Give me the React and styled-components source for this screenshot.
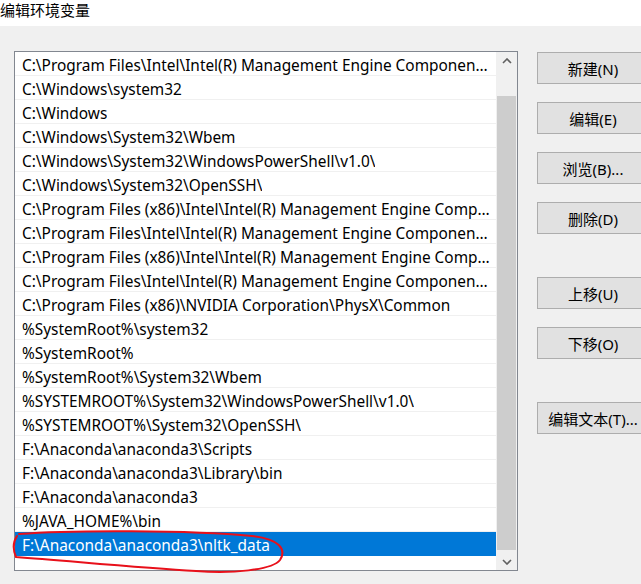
import styled, { createGlobalStyle } from "styled-components";

const paths = [
  "C:\\Program Files\\Intel\\Intel(R) Management Engine Components\\DAL",
  "C:\\Windows\\system32",
  "C:\\Windows",
  "C:\\Windows\\System32\\Wbem",
  "C:\\Windows\\System32\\WindowsPowerShell\\v1.0\\",
  "C:\\Windows\\System32\\OpenSSH\\",
  "C:\\Program Files (x86)\\Intel\\Intel(R) Management Engine Components\\DAL",
  "C:\\Program Files\\Intel\\Intel(R) Management Engine Components\\IPT",
  "C:\\Program Files (x86)\\Intel\\Intel(R) Management Engine Components\\IPT",
  "C:\\Program Files\\Intel\\Intel(R) Management Engine Components\\ICLS",
  "C:\\Program Files (x86)\\NVIDIA Corporation\\PhysX\\Common",
  "%SystemRoot%\\system32",
  "%SystemRoot%",
  "%SystemRoot%\\System32\\Wbem",
  "%SYSTEMROOT%\\System32\\WindowsPowerShell\\v1.0\\",
  "%SYSTEMROOT%\\System32\\OpenSSH\\",
  "F:\\Anaconda\\anaconda3\\Scripts",
  "F:\\Anaconda\\anaconda3\\Library\\bin",
  "F:\\Anaconda\\anaconda3",
  "%JAVA_HOME%\\bin",
  "F:\\Anaconda\\anaconda3\\nltk_data",
];

const buttons = [
  { label: "新建(N)", top: 0 },
  { label: "编辑(E)", top: 18 },
  { label: "浏览(B)...", top: 18 },
  { label: "删除(D)", top: 18 },
  { label: "上移(U)", top: 43 },
  { label: "下移(O)", top: 18 },
  { label: "编辑文本(T)...", top: 43 },
];

const GlobalStyle = createGlobalStyle`
  html, body {
    margin: 0;
    padding: 0;
    background: #f0f0f0;
    overflow: hidden;
  }
  body {
    font-family: "Noto Sans", "Noto Sans CJK SC", sans-serif;
  }
`;

const Page = () => {
  return (
    <Root>
      <GlobalStyle />
      <TitleBar>编辑环境变量</TitleBar>

      <Body>
        <ListBox>
          <Rows>
            {paths.map((p, i) => (
              <Row key={i} $selected={i === paths.length - 1}>
                <RowText>{p}</RowText>
              </Row>
            ))}
          </Rows>
          <ScrollBar>
            <ArrowBtn>
              <Chevron up />
            </ArrowBtn>
            <Track>
              <Thumb />
            </Track>
            <ArrowBtn>
              <Chevron />
            </ArrowBtn>
          </ScrollBar>
        </ListBox>

        <Buttons>
          {buttons.map((b) => (
            <Button key={b.label} $top={b.top}>
              {b.label}
            </Button>
          ))}
        </Buttons>
      </Body>

      {/* red hand drawn circle round the new entry */}
      <Scribble width="641" height="584" viewBox="0 0 641 584">
        <path
          d="M19 534 C 70 530, 190 530, 252 536 C 279 539, 287 549, 280 560 C 272 570, 232 574, 196 571 C 140 568, 70 561, 16 557 C 13 550, 13 542, 17 536"
          fill="none"
          stroke="#e8101a"
          strokeWidth="2"
          strokeLinecap="round"
        />
      </Scribble>
    </Root>
  );
};

const Chevron = ({ up }) => (
  <svg width="10" height="6" viewBox="0 0 10 6">
    <path
      d={up ? "M1 5 L5 1 L9 5" : "M1 1 L5 5 L9 1"}
      fill="none"
      stroke="#606060"
      strokeWidth="1.6"
    />
  </svg>
);

const Root = styled.div`
  position: relative;
  width: 641px;
  height: 584px;
`;

const TitleBar = styled.div`
  height: 26px;
  background: #fff;
  color: #000;
  font-family: "Noto Sans CJK SC", sans-serif;
  font-size: 15px;
  line-height: 20px;
  box-sizing: border-box;
`;

const Body = styled.div`
  display: flex;
  align-items: flex-start;
  gap: 19px;
  padding: 25px 0 0 14px;
`;

const ListBox = styled.div`
  display: flex;
  width: 504px;
  height: 520px;
  box-sizing: border-box;
  border: 1px solid #828790;
  background: #fff;
  flex-shrink: 0;
`;

const Rows = styled.div`
  flex: 1;
  min-width: 0;
  overflow: hidden;
`;

const Row = styled.div`
  height: 24px;
  box-sizing: border-box;
  display: flex;
  align-items: center;
  padding: 4px 6px 0 7px;
  border-bottom: 1px solid ${(p) => (p.$selected ? "#0078d7" : "#f0f0f0")};
  background: ${(p) => (p.$selected ? "#0078d7" : "#fff")};
  color: ${(p) => (p.$selected ? "#fff" : "#000")};
  font-size: 15.4px;
`;

const RowText = styled.span`
  white-space: nowrap;
  overflow: hidden;
  text-overflow: ellipsis;
  line-height: 22px;
`;

const ScrollBar = styled.div`
  width: 21px;
  display: flex;
  flex-direction: column;
  background: #f0f0f0;
  padding: 0 1px;
  box-sizing: border-box;
`;

const ArrowBtn = styled.div`
  height: 17px;
  display: flex;
  align-items: center;
  justify-content: center;
`;

const Track = styled.div`
  flex: 1;
  padding: 27px 0 3px;
  display: flex;
`;

const Thumb = styled.div`
  flex: 1;
  background: #cdcdcd;
`;

const Buttons = styled.div`
  display: flex;
  flex-direction: column;
  padding-top: 1px;
`;

const Button = styled.div`
  margin-top: ${(p) => p.$top}px;
  width: 112px;
  height: 32px;
  box-sizing: border-box;
  border: 1px solid #adadad;
  background: #e1e1e1;
  display: flex;
  align-items: center;
  justify-content: center;
  font-family: "Noto Sans", "Noto Sans CJK SC", sans-serif;
  font-size: 15px;
  color: #000;
  white-space: nowrap;
`;

const Scribble = styled.svg`
  position: absolute;
  left: 0;
  top: 0;
  pointer-events: none;
`;

export default Page;
